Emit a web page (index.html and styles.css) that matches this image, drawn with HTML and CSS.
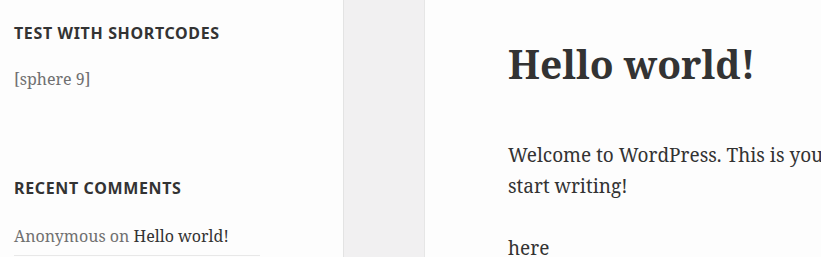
FILE: index.html
```html
<!DOCTYPE html>
<html lang="en">
<head>
<meta charset="utf-8">
<title>Hello world!</title>
<link rel="stylesheet" href="styles.css">
</head>
<body>
<div class="page">
  <aside class="sidebar">
    <section class="widget widget-shortcodes">
      <h2 class="widget-title">Test with shortcodes</h2>
      <p class="widget-text">[sphere 9]</p>
    </section>
    <section class="widget widget-comments">
      <h2 class="widget-title">Recent Comments</h2>
      <ul class="comment-list">
        <li class="comment-item"><span class="author">Anonymous</span> on <a class="comment-link" href="#">Hello world!</a></li>
      </ul>
    </section>
  </aside>
  <div class="gutter"></div>
  <main class="content">
    <article class="entry">
      <h1 class="entry-title">Hello world!</h1>
      <div class="entry-content">
        <p>Welcome to WordPress. This is your first post. Edit or delete it, then start writing!</p>
        <p>here</p>
      </div>
    </article>
  </main>
</div>
</body>
</html>
```

FILE: styles.css
```css
html, body {
  margin: 0;
  padding: 0;
}
body {
  background: #f1f0f1;
  font-family: "Noto Serif", "DejaVu Serif", serif;
  color: #333333;
  overflow: hidden;
  height: 257px;
}
.page {
  display: flex;
  align-items: stretch;
  height: 257px;
}
.sidebar {
  width: 344px;
  flex: none;
  background: #fdfdfd;
  border-right: 1px solid #e3e3e3;
  padding: 0 84px 0 14px;
  box-sizing: border-box;
}
.gutter {
  width: 80px;
  flex: none;
}
.content {
  flex: 1;
  background: #fdfdfd;
  border-left: 1px solid #e6e6e6;
  padding-left: 83px;
  overflow: hidden;
}
.widget {
  width: 246px;
}
.widget-title {
  font-family: "Noto Sans", "Open Sans", sans-serif;
  font-weight: 700;
  font-size: 16px;
  letter-spacing: 0.04em;
  text-transform: uppercase;
  color: #333333;
  margin: 0;
  line-height: 20px;
}
.widget-shortcodes .widget-title {
  padding-top: 23px;
}
.widget-text {
  margin: 24px 0 0;
  font-size: 16px;
  line-height: 24px;
  color: #707070;
}
.widget-comments {
  margin-top: 87px;
}
.comment-list {
  list-style: none;
  margin: 26px 0 0;
  padding: 0;
  border-bottom: 1px solid #e8e8e8;
}
.comment-item {
  font-size: 16px;
  line-height: 24px;
  color: #707070;
  padding-bottom: 7px;
}
.comment-link {
  color: #333333;
  text-decoration: none;
}
.entry-title {
  margin: 0;
  padding-top: 38px;
  font-size: 39px;
  line-height: 52px;
  font-weight: 700;
  white-space: nowrap;
  color: #333333;
}
.entry-content {
  margin-top: 50px;
  width: 630px;
}
.entry-content p {
  margin: 0 0 31px;
  font-size: 19px;
  line-height: 31px;
  color: #333333;
}
```
